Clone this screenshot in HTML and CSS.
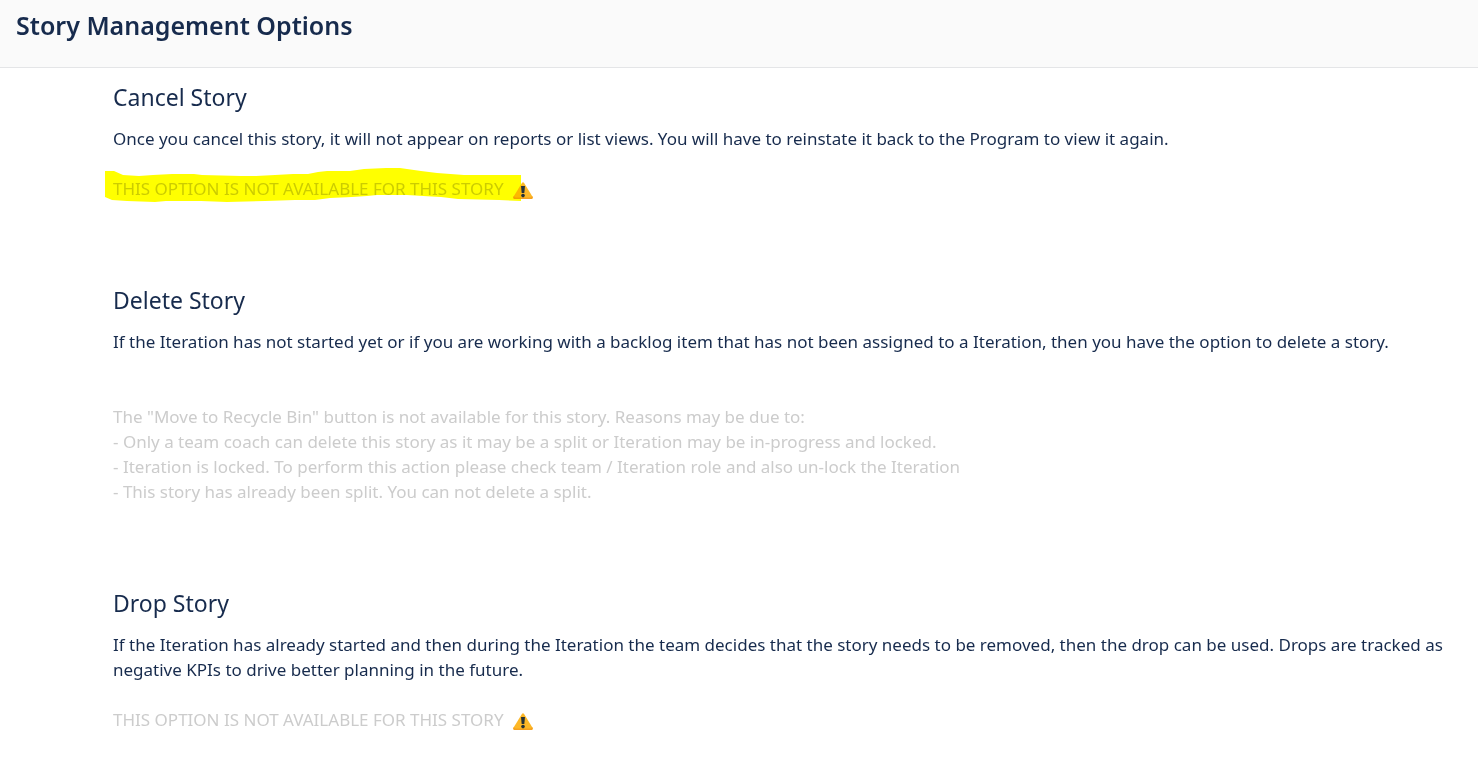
FILE: index.html
```html
<!DOCTYPE html>
<html lang="en">
<head>
    <meta charset="UTF-8">
    <meta name="viewport" content="width=device-width, initial-scale=1.0">
    <title>Story Management Options</title>
    <link rel="stylesheet" href="styles.css">
</head>
<body>
    <header class="page-header">
        <h1>Story Management Options</h1>
    </header>

    <main class="options">
        <section class="option">
            <h2>Cancel Story</h2>
            <p>Once you cancel this story, it will not appear on reports or list views. You will have to reinstate it back to the Program to view it again.</p>
            <p class="unavailable">
                THIS OPTION IS NOT AVAILABLE FOR THIS STORY
                <svg class="warning" viewBox="0 0 20 17" aria-hidden="true">
                    <path d="M8.9 1Q10 -0.4 11.1 1L19.7 15Q20 17 18.4 17H1.6Q0 17 0.3 15Z" fill="#fdb827"/>
                    <path d="M0.3 15Q0 17 1.6 17H18.4Q20 17 19.7 15L19 14Q18.6 15.6 17 15.6H3Q1.4 15.6 1 14Z" fill="#f5a11f"/>
                    <path d="M8 4H12L11.3 11H8.7Z" fill="#263238"/>
                    <circle cx="10" cy="13.6" r="1.8" fill="#263238"/>
                </svg>
                <!-- marker stroke over the text -->
                <svg class="marker" viewBox="0 0 416 34" aria-hidden="true">
                    <path d="M0 3H9L18 7L34 8L48 7L67 6H89L97 7L136 8L151 8L170 7L188 6H203L213 4L222 3H245L259 1L281 0H295L316 3L332 5L359 7H416V33L394 32L353 31L336 29L318 28L302 27H272L262 28L247 29L225 30L210 32H190L160 33L122 34L96 33H61L50 34L22 33L7 32L0 29Z" fill="#ffff00"/>
                </svg>
            </p>
        </section>

        <section class="option">
            <h2>Delete Story</h2>
            <p>If the Iteration has not started yet or if you are working with a backlog item that has not been assigned to a Iteration, then you have the option to delete a story.</p>
            <p class="unavailable reasons">
                The "Move to Recycle Bin" button is not available for this story. Reasons may be due to:<br>
                - Only a team coach can delete this story as it may be a split or Iteration may be in-progress and locked.<br>
                - Iteration is locked. To perform this action please check team / Iteration role and also un-lock the Iteration<br>
                - This story has already been split. You can not delete a split.
            </p>
        </section>

        <section class="option">
            <h2>Drop Story</h2>
            <p>If the Iteration has already started and then during the Iteration the team decides that the story needs to be removed, then the drop can be used. Drops are tracked as negative KPIs to drive better planning in the future.</p>
            <p class="unavailable">
                THIS OPTION IS NOT AVAILABLE FOR THIS STORY
                <svg class="warning" viewBox="0 0 20 17" aria-hidden="true">
                    <path d="M8.9 1Q10 -0.4 11.1 1L19.7 15Q20 17 18.4 17H1.6Q0 17 0.3 15Z" fill="#fdb827"/>
                    <path d="M0.3 15Q0 17 1.6 17H18.4Q20 17 19.7 15L19 14Q18.6 15.6 17 15.6H3Q1.4 15.6 1 14Z" fill="#f5a11f"/>
                    <path d="M8 4H12L11.3 11H8.7Z" fill="#263238"/>
                    <circle cx="10" cy="13.6" r="1.8" fill="#263238"/>
                </svg>
            </p>
        </section>
    </main>
</body>
</html>
```
FILE: styles.css
```css
body {
    margin: 0;
    font-family: "Segoe UI", "Noto Sans", sans-serif;
    font-size: 17px;
    line-height: 25px;
    color: #172b4d;
    background-color: #fff;
}

.page-header {
    padding: 8px 16px 25px;
    background-color: #fafafa;
    border-bottom: 1px solid #e4e5e7;
}

h1 {
    margin: 0;
    font-size: 25px;
    line-height: 34px;
    font-weight: 600;
}

.options {
    padding: 13px 32px 0 113px;
}

.option {
    margin-bottom: 83px;
}

.option:last-child {
    margin-bottom: 0;
}

h2 {
    margin: 0 0 13px;
    font-size: 23px;
    line-height: 32px;
    font-weight: 400;
}

p {
    margin: 0;
}

.unavailable {
    position: relative;
    margin-top: 25px;
    color: #ccc;
}

.reasons {
    margin-top: 50px;
}

.warning {
    width: 20px;
    height: 17px;
    margin-left: 5px;
    vertical-align: -4px;
}

.marker {
    position: absolute;
    top: -8px;
    left: -8px;
    width: 416px;
    height: 34px;
    mix-blend-mode: multiply;
}
```
